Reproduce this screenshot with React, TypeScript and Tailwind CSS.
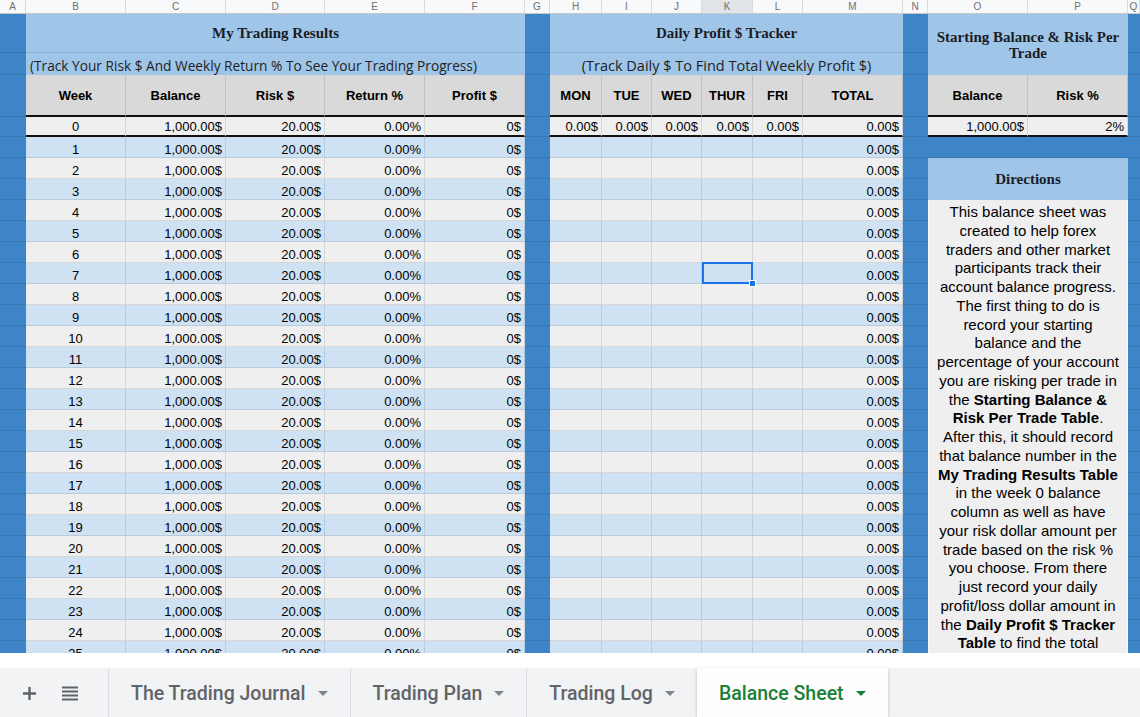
import React from "react";

const cols =
  "grid grid-cols-[26px_100px_100px_99px_100px_100px_25px_52px_50px_50px_51px_50px_100px_25px_100px_100px_12px]";

const letters = ["A", "B", "C", "D", "E", "F", "G", "H", "I", "J", "K", "L", "M", "N", "O", "P", "Q"];

const serif = "font-['Liberation_Serif',serif] font-bold text-[15px] text-[#1b1d26]";
const cell = "border-r border-b border-black/10 flex items-end px-[3px] text-[13px] leading-[15px]";

function Dark() {
  return <div className="bg-[#3d85c6] border-b border-black/10" />;
}

function Head({ label }: { label: string }) {
  return (
    <div className="bg-[#d9d9d9] border-r border-black/10 border-b-2 border-b-[#111] flex items-center justify-center pt-[2px] font-bold text-[13px]">
      {label}
    </div>
  );
}

type Seg = [string, boolean?];

const directions: Seg[][] = [
  [["This balance sheet was"]],
  [["created to help forex"]],
  [["traders and other market"]],
  [["participants track their"]],
  [["account balance progress."]],
  [["The first thing to do is"]],
  [["record your starting"]],
  [["balance and the"]],
  [["percentage of your account"]],
  [["you are risking per trade in"]],
  [["the "], ["Starting Balance &", true]],
  [["Risk Per Trade Table", true], ["."]],
  [["After this, it should record"]],
  [["that balance number in the"]],
  [["My Trading Results Table", true]],
  [["in the week 0 balance"]],
  [["column as well as have"]],
  [["your risk dollar amount per"]],
  [["trade based on the risk %"]],
  [["you choose. From there"]],
  [["just record your daily"]],
  [["profit/loss dollar amount in"]],
  [["the "], ["Daily Profit $ Tracker", true]],
  [["Table", true], [" to find the total"]],
  [["weekly profit."]],
];

function Row({ r }: { r: number }) {
  const bg = r % 2 === 0 ? "bg-[#efefef]" : "bg-[#cfe2f3]";
  const first = r === 0 ? "border-b-2 border-b-[#111] pb-px" : "";
  return (
    <>
      <Dark />
      <div className={`${cell} ${bg} ${first} justify-center`}>{r}</div>
      <div className={`${cell} ${bg} ${first} justify-end`}>1,000.00$</div>
      <div className={`${cell} ${bg} ${first} justify-end`}>20.00$</div>
      <div className={`${cell} ${bg} ${first} justify-end`}>0.00%</div>
      <div className={`${cell} ${bg} ${first} justify-end`}>0$</div>
      <Dark />
      {[0, 1, 2, 3, 4].map((d) => (
        <div key={d} className={`${cell} ${bg} ${first} justify-end relative`}>
          {r === 0 ? "0.00$" : ""}
          {r === 7 && d === 3 && (
            <div className="absolute -top-px left-0 w-[51px] h-[22px] border-2 border-[#1a73e8] z-10">
              <div className="absolute -right-[5px] -bottom-[5px] w-[7px] h-[7px] bg-[#1a73e8] border border-white" />
            </div>
          )}
        </div>
      ))}
      <div className={`${cell} ${bg} ${first} justify-end`}>0.00$</div>
      <Dark />
      {r === 0 && (
        <>
          <div className={`${cell} bg-[#efefef] ${first} justify-end`}>1,000.00$</div>
          <div className={`${cell} bg-[#efefef] ${first} justify-end`}>2%</div>
        </>
      )}
      {r === 1 && (
        <>
          <Dark />
          <Dark />
        </>
      )}
      {r === 2 && (
        <div className={`col-span-2 row-span-2 bg-[#9fc5e8] flex items-center justify-center ${serif}`}>
          Directions
        </div>
      )}
      {r === 4 && (
        <div className="col-span-2 row-span-22 bg-[#efefef] border-x border-[#f8f8f8] text-center text-[15px] leading-[18.75px] pt-[3px] overflow-hidden">
          {directions.map((line, i) => (
            <div key={i}>
              {line.map(([t, b], j) =>
                b ? (
                  <b key={j}>{t}</b>
                ) : (
                  <span key={j}>{t}</span>
                )
              )}
            </div>
          ))}
        </div>
      )}
      <Dark />
    </>
  );
}

function Caret() {
  return (
    <svg width="10" height="6" viewBox="0 0 10 6">
      <polygon points="0,0 10,0 5,5" fill="currentColor" />
    </svg>
  );
}

export default function App() {
  const rows = Array.from({ length: 26 }, (_, i) => i);
  const tabs = ["The Trading Journal", "Trading Plan", "Trading Log"];

  return (
    <div className="w-[1140px] h-[717px] overflow-hidden bg-white font-['Liberation_Sans',Arial,sans-serif] text-black">
      {/* column letters */}
      <div className={`${cols} h-[14px] bg-[#f8f9fa] border-b border-[#c7c7c7]`}>
        {letters.map((l) => (
          <div
            key={l}
            className={`flex items-center justify-center text-[10px] leading-none text-[#6f6f6f] border-r border-[#dadada] ${
              l === "K" ? "bg-[#e1e4e8]" : ""
            }`}
          >
            {l}
          </div>
        ))}
      </div>

      {/* sheet */}
      <div className={`${cols} grid-rows-[39px_22px_42px_20px] auto-rows-[21px] h-[639px] overflow-hidden`}>
        {/* title row */}
        <Dark />
        <div className={`col-span-5 bg-[#9fc5e8] border-b border-black/10 flex items-center justify-center pt-px ${serif}`}>
          My Trading Results
        </div>
        <Dark />
        <div className={`col-span-6 bg-[#9fc5e8] border-b border-black/10 flex items-center justify-center pt-px ${serif}`}>
          Daily Profit $ Tracker
        </div>
        <Dark />
        <div className={`col-span-2 row-span-2 bg-[#9fc5e8] flex items-center justify-center text-center leading-[16px] ${serif}`}>
          Starting Balance &amp; Risk Per
          <br />
          Trade
        </div>
        <Dark />

        {/* subtitle row */}
        <Dark />
        <div className="col-span-5 bg-[#9fc5e8] flex items-end pl-[4px] font-['Open_Sans',sans-serif] text-[13.7px] leading-[19px] text-[#1f1f1f]">
          (Track Your Risk $ And Weekly Return % To See Your Trading Progress)
        </div>
        <Dark />
        <div className="col-span-6 bg-[#9fc5e8] flex items-end justify-center font-['Open_Sans',sans-serif] text-[14.5px] leading-[19px] text-[#1f1f1f]">
          (Track Daily $ To Find Total Weekly Profit $)
        </div>
        <Dark />
        <Dark />

        {/* header row */}
        <Dark />
        {["Week", "Balance", "Risk $", "Return %", "Profit $"].map((h) => (
          <Head key={h} label={h} />
        ))}
        <Dark />
        {["MON", "TUE", "WED", "THUR", "FRI", "TOTAL"].map((h) => (
          <Head key={h} label={h} />
        ))}
        <Dark />
        <Head label="Balance" />
        <Head label="Risk %" />
        <Dark />

        {rows.map((r) => (
          <Row key={r} r={r} />
        ))}
      </div>

      <div className="h-[15px]" />

      {/* sheet tabs */}
      <div className="h-[49px] bg-[#f1f3f4] flex items-stretch font-['Roboto',sans-serif]">
        <div className="w-[108px] flex items-center pl-[22px] pt-[2px] gap-[25px] text-[#5f6368]">
          <svg width="15" height="15" viewBox="0 0 15 15">
            <path d="M7.5 1v13M1 7.5h13" stroke="currentColor" strokeWidth="2.4" />
          </svg>
          <svg width="16" height="15" viewBox="0 0 16 15">
            <path d="M0 1.5h16M0 5.5h16M0 9.5h16M0 13.5h16" stroke="currentColor" strokeWidth="2" />
          </svg>
        </div>
        {tabs.map((t) => (
          <div
            key={t}
            className="flex items-center gap-[12px] px-[22px] pt-[3px] border-l border-[#dadce0] text-[19.5px] font-medium text-[#616468]"
          >
            {t}
            <span className="text-[#80868b]">
              <Caret />
            </span>
          </div>
        ))}
        <div className="flex items-center gap-[12px] px-[22px] pt-[3px] bg-[#fdfdfd] shadow-[0_1px_3px_rgba(60,64,67,0.3)] text-[19.5px] font-medium text-[#188038]">
          Balance Sheet
          <Caret />
        </div>
      </div>
    </div>
  );
}
